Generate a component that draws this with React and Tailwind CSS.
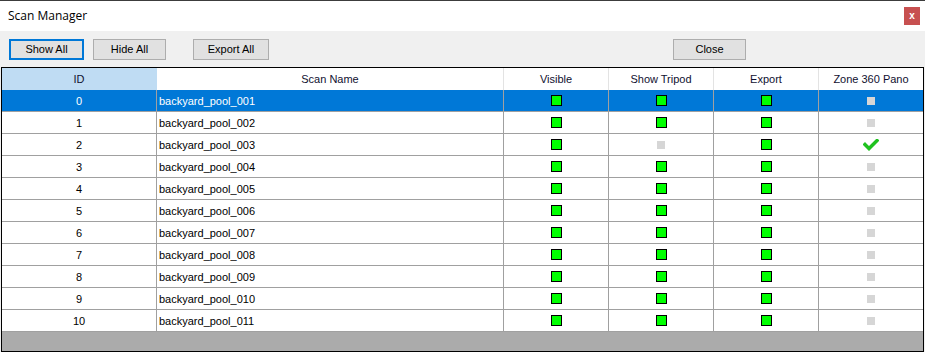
import React from "react";

const rows = [
  { vis: true, tri: true, exp: true, pano: false },
  { vis: true, tri: true, exp: true, pano: false },
  { vis: true, tri: false, exp: true, pano: true },
  { vis: true, tri: true, exp: true, pano: false },
  { vis: true, tri: true, exp: true, pano: false },
  { vis: true, tri: true, exp: true, pano: false },
  { vis: true, tri: true, exp: true, pano: false },
  { vis: true, tri: true, exp: true, pano: false },
  { vis: true, tri: true, exp: true, pano: false },
  { vis: true, tri: true, exp: true, pano: false },
  { vis: true, tri: true, exp: true, pano: false },
];

const cols = ["w-[155px]", "w-[347px]", "w-[105px]", "w-[105px]", "w-[105px]", "w-[104px]"];

const On = () => <div className="w-[11px] h-[11px] bg-[#00ff00] border border-black" />;
const Off = () => <div className="w-[8px] h-[8px] bg-[#d6d6d6]" />;
const Check = () => (
  <svg width="16" height="12" viewBox="0 0 16 12">
    <polyline points="2,5.5 6,9.5 14,1.5" fill="none" stroke="#1fc21f" strokeWidth="3.4" strokeLinecap="square" />
  </svg>
);

const Button = ({ children, focus, className = "" }) => (
  <button
    className={`h-[21px] bg-[#e1e1e1] text-[11px] text-black flex items-center justify-center ${
      focus ? "border-2 border-[#0078d7]" : "border border-[#adadad]"
    } ${className}`}
  >
    {children}
  </button>
);

export default function App() {
  return (
    <div
      className="w-[925px] h-[352px] bg-[#f0f0f0] flex flex-col overflow-hidden"
      style={{ fontFamily: '"Liberation Sans", Arial, sans-serif' }}
    >
      <div className="h-[1px] bg-[#3c3c3c]" />
      <div className="h-[30px] bg-white flex items-center justify-between pl-[8px] pr-[5px]">
        <span className="text-[12px] text-black" style={{ fontFamily: '"Open Sans", sans-serif' }}>
          Scan Manager
        </span>
        <div className="w-[16px] h-[18px] bg-[#c75050] flex items-center justify-center text-white text-[10px] font-bold leading-none">
          x
        </div>
      </div>
      <div className="h-[36px] flex items-start pt-[8px] pl-[9px]">
        <Button focus className="w-[75px]">Show All</Button>
        <Button className="w-[73px] ml-[9px]">Hide All</Button>
        <Button className="w-[76px] ml-[27px]">Export All</Button>
        <Button className="w-[73px] ml-[404px]">Close</Button>
      </div>
      <div className="ml-[1px] w-[923px] h-[285px] border border-black flex flex-col bg-[#ababab]">
        <div className="h-[22px] flex bg-white text-[11px] text-[#101030]">
          {["ID", "Scan Name", "Visible", "Show Tripod", "Export", "Zone 360 Pano"].map((h, i) => (
            <div
              key={h}
              className={`${cols[i]} flex items-center justify-center ${
                i === 0 ? "bg-[#bfdcf3] border-r border-[#bfdcf3]" : i < 5 ? "border-r border-[#e3e3e3]" : ""
              }`}
            >
              {h}
            </div>
          ))}
        </div>
        {rows.map((r, i) => {
          const sel = i === 0;
          const cell = `h-full border-r border-[#a0a0a0] flex items-center justify-center`;
          return (
            <div
              key={i}
              className={`h-[22px] flex border-b border-[#a0a0a0] text-[11px] ${
                sel ? "bg-[#0078d7] text-white" : "bg-white text-black"
              }`}
            >
              <div className={`${cols[0]} ${cell} pt-[1px]`}>{i}</div>
              <div className={`${cols[1]} h-full border-r border-[#a0a0a0] flex items-center pl-[2px] pt-[1px]`}>
                backyard_pool_{String(i + 1).padStart(3, "0")}
              </div>
              <div className={`${cols[2]} ${cell}`}>{r.vis ? <On /> : <Off />}</div>
              <div className={`${cols[3]} ${cell}`}>{r.tri ? <On /> : <Off />}</div>
              <div className={`${cols[4]} ${cell}`}>{r.exp ? <On /> : <Off />}</div>
              <div className={`${cols[5]} h-full flex items-center justify-center`}>
                {r.pano ? <Check /> : <Off />}
              </div>
            </div>
          );
        })}
      </div>
    </div>
  );
}
